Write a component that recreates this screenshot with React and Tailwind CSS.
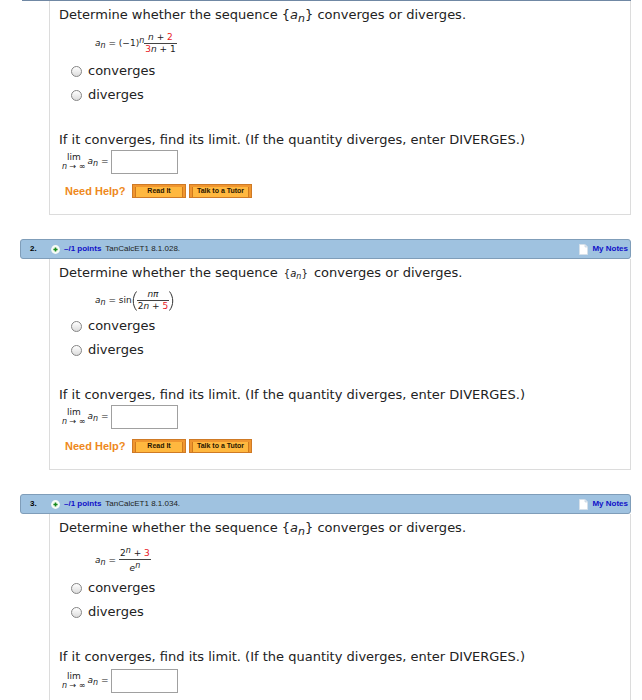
import React, { useState } from "react";

const Sub = ({ children }) => (
  <span className="relative top-[2px] text-[8px] italic">{children}</span>
);

const Sup = ({ children }) => (
  <span className="relative -top-[3px] text-[8px] italic">{children}</span>
);

const Red = ({ children }) => <span className="text-[#e8161d]">{children}</span>;

const An = () => (
  <span className="italic">
    a<Sub>n</Sub>
  </span>
);

const Fraction = ({ top, bottom, roomy }) => (
  <span className="inline-flex flex-col items-center text-center leading-[11px]">
    <span className="w-full border-b border-[#444] px-px">{top}</span>
    <span className={roomy ? "px-px pt-[3px]" : "px-px"}>{bottom}</span>
  </span>
);

const Paren = ({ flip }) => (
  <svg
    width="5"
    height="20"
    viewBox="0 0 5 20"
    className={flip ? "-scale-x-100" : ""}
    fill="none"
    stroke="#333"
  >
    <path d="M4.5 .5C.2 6 .2 14 4.5 19.5" />
  </svg>
);

const PlusIcon = () => (
  <svg width="9" height="9" viewBox="0 0 9 9">
    <circle cx="4.5" cy="4.5" r="4.4" fill="#f6fbf6" />
    <path d="M4.5 2.400v4.200M2.400 4.500h4.200" stroke="#168a1c" strokeWidth="1.6" />
  </svg>
);

const NoteIcon = () => (
  <svg width="9" height="11" viewBox="0 0 9 11">
    <path d="M.5.5h5.5l2.5 2.5v7.500H.5z" fill="#fff" stroke="#d5e0ea" />
    <path d="M6 .5v2.500h2.500" fill="#e4edf5" stroke="#b9c9d8" strokeWidth=".6" />
  </svg>
);

const Header = ({ number, source }) => (
  <header className="mr-[11px] ml-5 flex h-5 items-center rounded-[3px] border border-[#7f9db9] bg-[#9fc2e0] font-['Liberation_Sans',Arial,sans-serif] text-[8px] text-[#222]">
    <b className="w-[30px] pl-[9px] text-black">{number}.</b>
    <PlusIcon />
    <a href="#points" className="ml-1 font-bold text-[#1010c8]">
      –/1 points
    </a>
    <span className="ml-1">{source}</span>
    <a href="#notes" className="mr-[2px] ml-auto flex items-center gap-1 font-bold text-[#1010c8]">
      <NoteIcon />
      My Notes
    </a>
  </header>
);

const HelpButton = ({ children, width }) => (
  <button
    type="button"
    className={`${width} flex h-[14px] items-center justify-center border border-[#cf7a25] bg-[#f0962f] px-[2px] pt-px font-['Liberation_Sans',Arial,sans-serif] text-[7px] font-bold text-[#2a1600]`}
  >
    <span className="flex h-[10px] w-full items-center justify-center border-x border-[#d07a1c] bg-[#ffb83f]">
      {children}
    </span>
  </button>
);

const Question = ({ id, smallSet, formula, formulaBox, limitGap, showHelp }) => {
  const [choice, setChoice] = useState("");
  const [limit, setLimit] = useState("");

  return (
    <section className="mr-[11px] ml-[49px] border border-t-0 border-[#dcdcdc] pt-[2px] pb-4 pl-[9px]">
      <p className="leading-6">
        Determine whether the sequence{" "}
        {smallSet ? (
          <span className="px-[2px] text-[10px]">
            {"{"}
            <An />
            {"}"}
          </span>
        ) : (
          <span>
            {"{"}
            <i>
              a<span className="relative top-[3px] text-[11px]">n</span>
            </i>
            {"}"}
          </span>
        )}{" "}
        converges or diverges.
      </p>
      <div className={`${formulaBox} flex items-center pl-9 text-[9px]`}>{formula}</div>
      {["converges", "diverges"].map((option) => (
        <label key={option} className="flex h-6 items-center gap-[6px] pl-3">
          <input
            type="radio"
            name={`q${id}`}
            checked={choice === option}
            onChange={() => setChoice(option)}
            className="size-[11px] appearance-none rounded-full border border-[#858585] bg-linear-to-b from-white to-[#dcdcdc] checked:bg-[#555]"
          />
          {option}
        </label>
      ))}
      <p className="mt-[22px] leading-[21px]">
        If it converges, find its limit. (If the quantity diverges, enter DIVERGES.)
      </p>
      <label className={`${limitGap} flex h-6 items-center pl-[3px] text-[9px]`}>
        <span className="mr-[2px] flex flex-col items-center leading-[9px]">
          <span>lim</span>
          <span className="text-[8px]">
            <i>n</i> → ∞
          </span>
        </span>
        <span className="mr-[2px]">
          <An /> =
        </span>
        <input
          type="text"
          value={limit}
          onChange={(e) => setLimit(e.target.value)}
          className="h-6 w-[67px] border border-[#a0a0a0] bg-white px-1 text-[13px]"
        />
      </label>
      {showHelp && (
        <div className="mt-[10px] flex h-[14px] items-center gap-[3px] pl-[6px]">
          <span className="w-16 font-['Liberation_Sans',Arial,sans-serif] text-[11px] font-bold whitespace-nowrap text-[#ee8820]">
            Need Help?
          </span>
          <HelpButton width="w-[54px]">Read It</HelpButton>
          <HelpButton width="w-[63px]">Talk to a Tutor</HelpButton>
        </div>
      )}
    </section>
  );
};

const App = () => {
  return (
    <main className="h-screen overflow-hidden bg-white font-['DejaVu_Sans',Verdana,sans-serif] text-[13px] text-[#222]">
      {/* bottom edge of the first question's header */}
      <div className="mr-[11px] ml-[22px] h-px bg-[#7088a4]" />
      <Question
        id={1}
        showHelp
        formulaBox="h-[31px]"
        limitGap="mt-0"
        formula={
          <>
            <span>
              <An /> = (−1)<Sup>n</Sup>
            </span>
            <Fraction
              top={<><i>n</i> + <Red>2</Red></>}
              bottom={<><Red>3</Red><i>n</i> + 1</>}
            />
          </>
        }
      />

      <div className="h-6" />
      <Header number={2} source="TanCalcET1 8.1.028." />
      <Question
        id={2}
        smallSet
        showHelp
        formulaBox="h-[27px]"
        limitGap="mt-0"
        formula={
          <>
            <span>
              <An /> = sin
            </span>
            <Paren />
            <Fraction
              top={<i>nπ</i>}
              bottom={<>2<i>n</i> + <Red>5</Red></>}
            />
            <Paren flip />
          </>
        }
      />

      <div className="h-6" />
      <Header number={3} source="TanCalcET1 8.1.034." />
      <Question
        id={3}
        formulaBox="h-[35px] pt-1"
        limitGap="mt-[2px]"
        formula={
          <>
            <span className="mr-[3px]">
              <An /> =
            </span>
            <Fraction
              roomy
              top={<>2<Sup>n</Sup> + <Red>3</Red></>}
              bottom={<i>e<Sup>n</Sup></i>}
            />
          </>
        }
      />
    </main>
  );
};

export default App;
